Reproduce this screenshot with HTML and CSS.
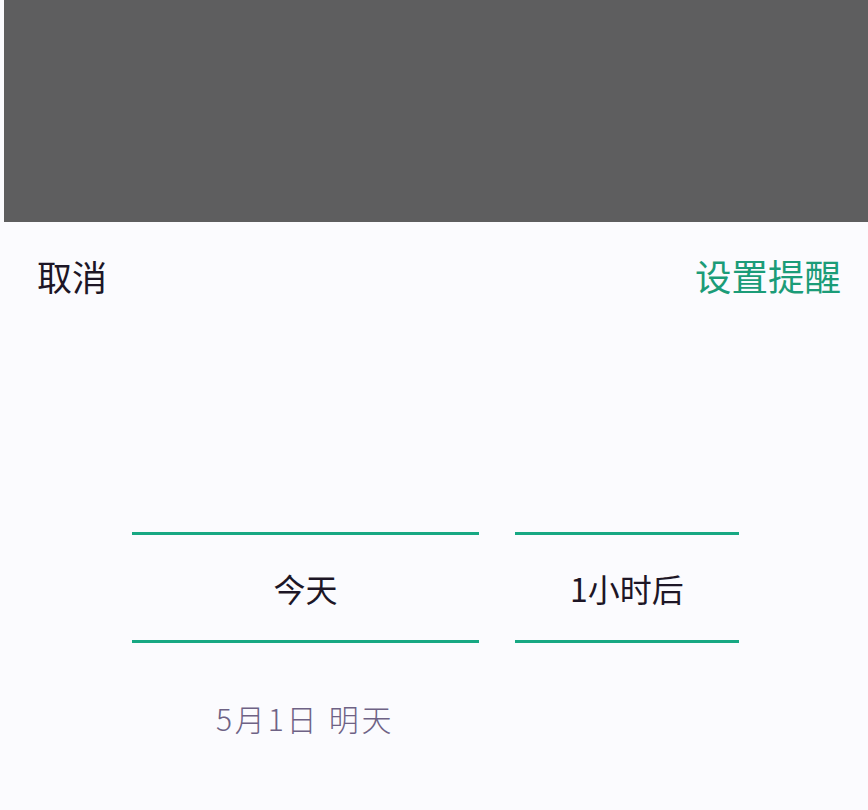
FILE: index.html
```html
<!DOCTYPE html>
<html lang="zh-CN">
<head>
  <meta charset="UTF-8" />
  <meta name="viewport" content="width=device-width, initial-scale=1.0">
  <title>设置提醒</title>
  <link rel="stylesheet" href="styles.css">
</head>
<body>
  <div class="mask"></div>

  <div class="sheet">
    <div class="sheet-header">
      <span class="btn-cancel">取消</span>
      <span class="btn-confirm">设置提醒</span>
    </div>

    <div class="picker">
      <div class="picker-col picker-day">
        <div class="picker-item">今天</div>
      </div>
      <div class="picker-col picker-time">
        <div class="picker-item">1小时后</div>
      </div>
    </div>

    <div class="picker-hint">5月1日 明天</div>
  </div>
</body>
</html>
```

FILE: styles.css
```css
:root {
  --green: #17a883;
  --green-text: #1b9c78;
  --text: #1d1626;
  --text-muted: #6e6285;
  --background: #fbfbfe;
  --mask: #5e5e5f;
}

html, body {
  margin: 0;
  padding: 0;
}

body {
  font-family: "Noto Sans CJK SC", "Noto Sans", sans-serif;
  background: var(--background);
  color: var(--text);
  width: 868px;
  height: 810px;
  overflow: hidden;
}

.mask {
  height: 222px;
  margin-left: 4px;
  background: var(--mask);
}

.sheet {
  padding-top: 33px;
}

.sheet-header {
  display: flex;
  justify-content: space-between;
  align-items: center;
  padding: 0 27px 0 37px;
  height: 42px;
  font-size: 35px;
  line-height: 42px;
}

.btn-cancel {
  color: var(--text);
}

.btn-confirm {
  color: var(--green-text);
  font-size: 36.5px;
}

.picker {
  display: flex;
  gap: 36px;
  margin-top: 235px;
  padding-left: 132px;
}

.picker-col {
  border-top: 3px solid var(--green);
  border-bottom: 3px solid var(--green);
}

.picker-day {
  width: 347px;
}

.picker-time {
  width: 224px;
}

.picker-item {
  height: 105px;
  display: flex;
  align-items: center;
  justify-content: center;
  font-size: 32px;
  color: var(--text);
}

.picker-hint {
  margin-top: 56px;
  padding-left: 216px;
  font-size: 30px;
  line-height: 38px;
  letter-spacing: 2.8px;
  color: var(--text-muted);
  font-weight: 300;
}
```
